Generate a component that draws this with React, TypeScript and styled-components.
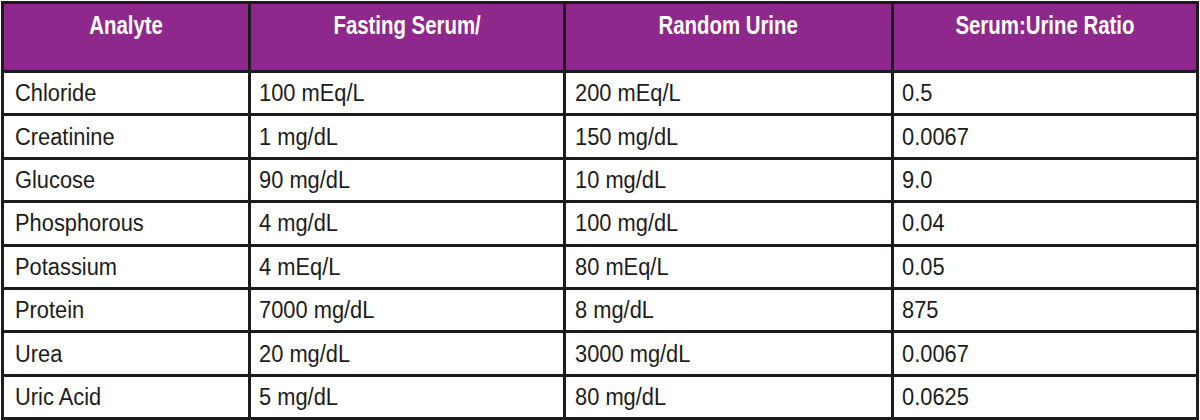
import * as React from 'react'
import styled, { createGlobalStyle } from 'styled-components'

const GlobalStyle = createGlobalStyle`
  html, body {
    margin: 0;
    padding: 0;
    background: #ffffff;
  }
`

const Table = styled.table`
  border-collapse: collapse;
  width: 1197px;
  margin: 1px 0 0 1px;
  table-layout: fixed;
  font-family: "Liberation Sans", Arial, sans-serif;
  color: #1c1c1c;
`

const HeadCell = styled.th`
  background: #8f288d;
  color: #ffffff;
  border: 3px solid #1d1b1d;
  height: 60px;
  padding: 6px 0 0;
  vertical-align: top;
  text-align: center;
  font-weight: 700;
  font-size: 25.5px;
  line-height: 30px;
`

// the source uses a condensed face; squeeze the regular one to match
const Squeeze = styled.span<{ $scale: number; $origin: string }>`
  display: inline-block;
  transform: scaleX(${(p) => p.$scale});
  transform-origin: ${(p) => p.$origin};
  white-space: nowrap;
`

const Cell = styled.td<{ $pad: number }>`
  border: 3px solid #1d1b1d;
  height: 40.4px;
  padding: 0 0 0 ${(p) => p.$pad}px;
  font-size: 23.5px;
  line-height: 40px;
  white-space: nowrap;
`

const columns = [
  { title: 'Analyte', width: 247, pad: 11 },
  { title: 'Fasting Serum/', width: 315, pad: 8 },
  { title: 'Random Urine', width: 328, pad: 9 },
  { title: 'Serum:Urine Ratio', width: 305, pad: 8 },
]

const rows = [
  ['Chloride', '100 mEq/L', '200 mEq/L', '0.5'],
  ['Creatinine', '1 mg/dL', '150 mg/dL', '0.0067'],
  ['Glucose', '90 mg/dL', '10 mg/dL', '9.0'],
  ['Phosphorous', '4 mg/dL', '100 mg/dL', '0.04'],
  ['Potassium', '4 mEq/L', '80 mEq/L', '0.05'],
  ['Protein', '7000 mg/dL', '8 mg/dL', '875'],
  ['Urea', '20 mg/dL', '3000 mg/dL', '0.0067'],
  ['Uric Acid', '5 mg/dL', '80 mg/dL', '0.0625'],
]

export default function App() {
  return (
    <>
      <GlobalStyle />
      <Table>
        <colgroup>
          {columns.map((c) => (
            <col key={c.title} style={{ width: c.width }} />
          ))}
        </colgroup>
        <thead>
          <tr>
            {columns.map((c) => (
              <HeadCell key={c.title}>
                <Squeeze $scale={0.8} $origin="center">{c.title}</Squeeze>
              </HeadCell>
            ))}
          </tr>
        </thead>
        <tbody>
          {rows.map((r) => (
            <tr key={r[0]}>
              {r.map((v, i) => (
                <Cell key={i} $pad={columns[i].pad}>
                  <Squeeze $scale={0.93} $origin="left">{v}</Squeeze>
                </Cell>
              ))}
            </tr>
          ))}
        </tbody>
      </Table>
    </>
  )
}
